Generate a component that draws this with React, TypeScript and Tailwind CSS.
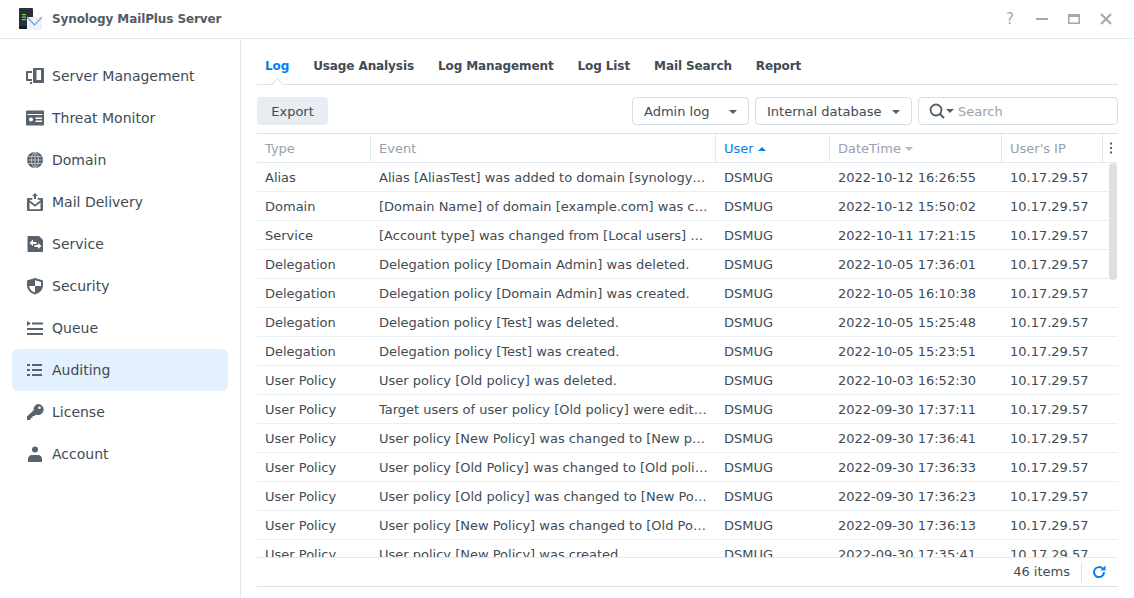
import { ReactNode } from 'react'

const iconClass = 'w-[18px] h-[18px] flex-shrink-0 text-[#59636e] fill-current'

function AppLogo() {
    return (
        <svg viewBox="0 0 23 23" className="w-[23px] h-[23px] flex-shrink-0">
            <rect x="0" y="0" width="14" height="21" rx="1" fill="#27323c" />
            <rect x="0" y="18" width="14" height="3" fill="#141b21" />
            <rect x="3" y="6" width="4" height="1.200" fill="#6fe03c" />
            <rect x="3" y="8.500" width="4" height="1.200" fill="#6fe03c" />
            <rect x="3" y="11" width="4" height="1.200" fill="#6fe03c" />
            <path d="M8 9h15v13H8z" fill="#eef2f6" />
            <path d="M8 9l7.500 8L23 9" fill="none" stroke="#7ea9d6" strokeWidth="1.400" />
        </svg>
    )
}

const navItems: { label: string; icon: ReactNode; active?: boolean }[] = [
    {
        label: 'Server Management',
        icon: (
            <svg viewBox="0 0 18 18" className={iconClass}>
                <path fillRule="evenodd" d="M8 1h9a1 1 0 0 1 1 1v13a1 1 0 0 1-1 1H8a1 1 0 0 1-1-1V2a1 1 0 0 1 1-1zm2.500 2v10h4.500V3z" />
                <path d="M1 4h5v2H2v6h4v2H1a1 1 0 0 1-1-1V5a1 1 0 0 1 1-1z" />
                <rect x="4" y="15" width="2" height="2" />
            </svg>
        ),
    },
    {
        label: 'Threat Monitor',
        icon: (
            <svg viewBox="0 0 18 18" className={iconClass}>
                <path
                    fillRule="evenodd"
                    d="M1 1.500h16a1 1 0 0 1 1 1v13a1 1 0 0 1-1 1H1a1 1 0 0 1-1-1v-13a1 1 0 0 1 1-1zM1.500 5v1h15V5zM5 8.500a2 2 0 1 0 0 4 2 2 0 0 0 0-4zm4.500 0V10H16V8.500zm0 3V13H16v-1.500z"
                />
            </svg>
        ),
    },
    {
        label: 'Domain',
        icon: (
            <svg viewBox="0 0 18 18" className={iconClass}>
                <circle cx="9" cy="9" r="8" />
                <g fill="none" stroke="#fff" strokeWidth="0.700" opacity="0.800">
                    <ellipse cx="9" cy="9" rx="3.500" ry="7.500" />
                    <path d="M9 1v16M1.500 9h15M2.500 5.500h13M2.500 12.500h13" />
                </g>
            </svg>
        ),
    },
    {
        label: 'Mail Delivery',
        icon: (
            <svg viewBox="0 0 18 18" className={iconClass}>
                <path d="M9 0l3 3H10v3H8V3H6z" />
                <path
                    fillRule="evenodd"
                    d="M1 5h5v1.800H2.800v.4L9 11.500l6.200-4.300v-.4H12V5h5a1 1 0 0 1 1 1v11a1 1 0 0 1-1 1H1a1 1 0 0 1-1-1V6a1 1 0 0 1 1-1zm1.800 4.400v6.800h12.400V9.400L9 13.700z"
                    transform="translate(1 0) scale(0.889 1)"
                />
            </svg>
        ),
    },
    {
        label: 'Service',
        icon: (
            <svg viewBox="0 0 18 18" className={iconClass}>
                <path
                    fillRule="evenodd"
                    d="M2.500 1h10.500l4 4v11a1 1 0 0 1-1 1H2.500a1 1 0 0 1-1-1V2a1 1 0 0 1 1-1zM7 4.500L3.500 8 7 11V9h3.500V7H7zm4 2.500v0zm1 1v2H8.500v2H12v2l3.500-3z"
                />
            </svg>
        ),
    },
    {
        label: 'Security',
        icon: (
            <svg viewBox="0 0 18 18" className={iconClass}>
                <path
                    fillRule="evenodd"
                    d="M9 1l8 2.500V8c0 4.500-3 8-8 9.500C4 16 1 12.500 1 8V3.500zm0 2.200V9H3c.4 3 2.600 5.300 6 6.500V9h6V4.900z"
                />
            </svg>
        ),
    },
    {
        label: 'Queue',
        icon: (
            <svg viewBox="0 0 18 18" className={iconClass}>
                <path d="M1 2l4 2.500L1 7zM6 3.500h11v2H6zM1 9h16v2H1zM1 14h16v2H1z" />
            </svg>
        ),
    },
    {
        label: 'Auditing',
        active: true,
        icon: (
            <svg viewBox="0 0 18 18" className={iconClass}>
                <path d="M1 3h3v2H1zM6 3h10v2H6zM1 8h3v2H1zM6 8h10v2H6zM1 13h3v2H1zM6 13h10v2H6z" />
            </svg>
        ),
    },
    {
        label: 'License',
        icon: (
            <svg viewBox="0 0 18 18" className={iconClass}>
                <path
                    fillRule="evenodd"
                    d="M12 1a5.500 5.500 0 1 1-2.200 10.500L8.500 13H6.500v2h-2v2H1v-3.500l6.700-6.200A5.500 5.500 0 0 1 12 1zm1.500 2.500a1.300 1.300 0 1 0 0 2.600 1.300 1.300 0 0 0 0-2.600z"
                />
            </svg>
        ),
    },
    {
        label: 'Account',
        icon: (
            <svg viewBox="0 0 18 18" className={iconClass}>
                <circle cx="9" cy="4.500" r="3" />
                <path d="M2 17v-3c0-2 1.500-4 4-4h6c2.500 0 4 2 4 4v3z" />
            </svg>
        ),
    },
]

const tabs = ['Log', 'Usage Analysis', 'Log Management', 'Log List', 'Mail Search', 'Report']

const rows = [
    ['Alias', 'Alias [AliasTest] was added to domain [synologytest.com].', '2022-10-12 16:26:55'],
    ['Domain', '[Domain Name] of domain [example.com] was changed to [synology.com].', '2022-10-12 15:50:02'],
    ['Service', '[Account type] was changed from [Local users] to [Domain users].', '2022-10-11 17:21:15'],
    ['Delegation', 'Delegation policy [Domain Admin] was deleted.', '2022-10-05 17:36:01'],
    ['Delegation', 'Delegation policy [Domain Admin] was created.', '2022-10-05 16:10:38'],
    ['Delegation', 'Delegation policy [Test] was deleted.', '2022-10-05 15:25:48'],
    ['Delegation', 'Delegation policy [Test] was created.', '2022-10-05 15:23:51'],
    ['User Policy', 'User policy [Old policy] was deleted.', '2022-10-03 16:52:30'],
    ['User Policy', 'Target users of user policy [Old policy] were edited successfully.', '2022-09-30 17:37:11'],
    ['User Policy', 'User policy [New Policy] was changed to [New policy].', '2022-09-30 17:36:41'],
    ['User Policy', 'User policy [Old Policy] was changed to [Old policy].', '2022-09-30 17:36:33'],
    ['User Policy', 'User policy [Old policy] was changed to [New Policy].', '2022-09-30 17:36:23'],
    ['User Policy', 'User policy [New Policy] was changed to [Old Policy].', '2022-09-30 17:36:13'],
    ['User Policy', 'User policy [New Policy] was created.', '2022-09-30 17:35:41'],
]

function Caret({ className }: { className: string }) {
    return <span className={`w-0 h-0 border-x-transparent ${className}`} />
}

function Dropdown({ label, width }: { label: string; width: string }) {
    return (
        <div className={`h-7 ${width} flex items-center justify-between pl-[11px] pr-[11px] pt-px border border-[#d5dde6] rounded text-[13px] text-[#414b55]`}>
            <span>{label}</span>
            <Caret className="border-x-[4px] border-t-[4px] border-t-[#525c66]" />
        </div>
    )
}

export default function App() {
    return (
        <div className="h-screen w-full flex flex-col bg-white overflow-hidden font-['DejaVu_Sans',sans-serif] text-[13px] text-[#414b55]">
            {/* Title bar */}
            <header className="h-[39px] flex-shrink-0 border-b border-[#e3e9ef] flex items-center pl-[19px] pr-[19px]">
                <AppLogo />
                <span className="ml-[10px] text-[12px] font-bold tracking-[-0.1px] text-[#525c66]">Synology MailPlus Server</span>
                <div className="ml-auto flex items-center gap-[14px] text-[#a0a8b0]">
                    <span className="w-[18px] text-center text-[15px] leading-none">?</span>
                    <svg viewBox="0 0 18 18" className="w-[18px] h-[18px]"><path d="M3 8h12v2H3z" fill="currentColor" /></svg>
                    <svg viewBox="0 0 18 18" className="w-[18px] h-[18px]"><path fillRule="evenodd" clipRule="evenodd" d="M3 4h12v10H3zM4.500 7v5.500h9V7z" fill="currentColor" /></svg>
                    <svg viewBox="0 0 18 18" className="w-[18px] h-[18px]"><path d="M4 4l10 10M14 4L4 14" stroke="currentColor" strokeWidth="2" /></svg>
                </div>
            </header>

            <div className="flex-1 flex overflow-hidden">
                {/* Sidebar */}
                <aside className="w-[241px] flex-shrink-0 border-r border-[#e3e9ef] pl-3 pr-3 pt-4">
                    {navItems.map((item) => (
                        <div
                            key={item.label}
                            className={`h-[42px] w-[216px] flex items-center gap-2 pl-[14px] rounded-md text-[14px] text-[#414b55] ${item.active ? 'bg-[#e3f0fd]' : ''}`}
                        >
                            {item.icon}
                            <span>{item.label}</span>
                        </div>
                    ))}
                </aside>

                {/* Main */}
                <main className="flex-1 min-w-0 flex flex-col pl-4 pr-4 pb-[11px]">
                    <nav className="relative h-[46px] flex-shrink-0 border-b border-[#d9e1e9] flex items-center gap-6 pl-[8px] pt-[8px] font-bold text-[12px] tracking-[-0.1px] text-[#414b55]">
                        {tabs.map((tab) => (
                            <span key={tab} className={tab === 'Log' ? 'text-[#057feb]' : ''}>
                                {tab}
                            </span>
                        ))}
                        <span className="absolute left-[16px] bottom-[-5px] w-[9px] h-[9px] rotate-45 bg-white border-l border-t border-[#d9e1e9]" />
                    </nav>

                    <div className="h-[48px] flex-shrink-0 flex items-start pt-3 gap-[6px]">
                        <button className="h-7 w-[71px] pt-px rounded bg-[#e8edf4] text-[13px] text-[#414b55] mr-auto">Export</button>
                        <Dropdown label="Admin log" width="w-[117px]" />
                        <Dropdown label="Internal database" width="w-[157px]" />
                        <div className="h-7 w-[200px] flex items-center pl-[10px] border border-[#d5dde6] rounded">
                            <svg viewBox="0 0 16 16" className="w-4 h-4 text-[#525c66]">
                                <circle cx="7" cy="7" r="5.500" fill="none" stroke="currentColor" strokeWidth="1.800" />
                                <path d="M11 11l4 4" stroke="currentColor" strokeWidth="2" />
                            </svg>
                            <Caret className="border-x-[4px] border-t-[4px] border-t-[#525c66] ml-[1px]" />
                            <span className="ml-[4px] pt-px text-[#9aa3ad]">Search</span>
                        </div>
                    </div>

                    {/* Table */}
                    <div className="flex-1 min-h-0 flex flex-col border-y border-[#d9e1e9]">
                        <div className="h-[29px] flex-shrink-0 flex border-b border-[#e3e9ef] text-[#98a1ab]">
                            <div className="w-[114px] flex items-center pl-2 pt-px border-r border-[#e3e9ef]">Type</div>
                            <div className="w-[345px] flex items-center pl-2 pt-px border-r border-[#e3e9ef]">Event</div>
                            <div className="w-[114px] flex items-center gap-[4px] pl-2 pt-px border-r border-[#e3e9ef] text-[#057feb]">
                                User
                                <Caret className="border-x-[4px] border-b-[4px] border-b-[#057feb]" />
                            </div>
                            <div className="w-[172px] flex items-center gap-[4px] pl-2 pt-px border-r border-[#e3e9ef]">
                                DateTime
                                <Caret className="border-x-[4px] border-t-[4px] border-t-[#b4bbc3]" />
                            </div>
                            <div className="w-[101px] flex items-center pl-2 pt-px border-r border-[#e3e9ef]">User's IP</div>
                            <div className="flex-1 flex items-center justify-center">
                                <svg viewBox="0 0 4 12" className="w-1 h-3 text-[#59636e] fill-current">
                                    <rect x="1" y="0.500" width="2" height="2" />
                                    <rect x="1" y="5" width="2" height="2" />
                                    <rect x="1" y="9.500" width="2" height="2" />
                                </svg>
                            </div>
                        </div>
                        <div className="relative flex-1 min-h-0 overflow-hidden">
                            {rows.map((row) => (
                                <div key={row[2]} className="h-[29px] flex items-center border-b border-[#e9eef3] pt-px">
                                    <div className="w-[114px] pl-2 truncate">{row[0]}</div>
                                    <div className="w-[345px] pl-2 pr-2 truncate">{row[1]}</div>
                                    <div className="w-[114px] pl-2">DSMUG</div>
                                    <div className="w-[172px] pl-2">{row[2]}</div>
                                    <div className="w-[101px] pl-2">10.17.29.57</div>
                                </div>
                            ))}
                            <div className="absolute right-[1px] top-0 w-2 h-[117px] rounded bg-[#dfdfdf]" />
                        </div>
                        <div className="h-[29px] flex-shrink-0 flex items-center justify-end border-t border-[#e3e9ef] pr-3">
                            <span>46 items</span>
                            <span className="ml-[11px] mr-[10px] h-[19px] border-l border-[#d9e1e9]" />
                            <svg viewBox="0 0 14 14" className="w-[14px] h-[14px] text-[#057feb]">
                                <path d="M12 7a5 5 0 1 1-1.500-3.500" fill="none" stroke="currentColor" strokeWidth="2" />
                                <path d="M13.500 0.500v5h-5z" fill="currentColor" />
                            </svg>
                        </div>
                    </div>
                </main>
            </div>
        </div>
    )
}
